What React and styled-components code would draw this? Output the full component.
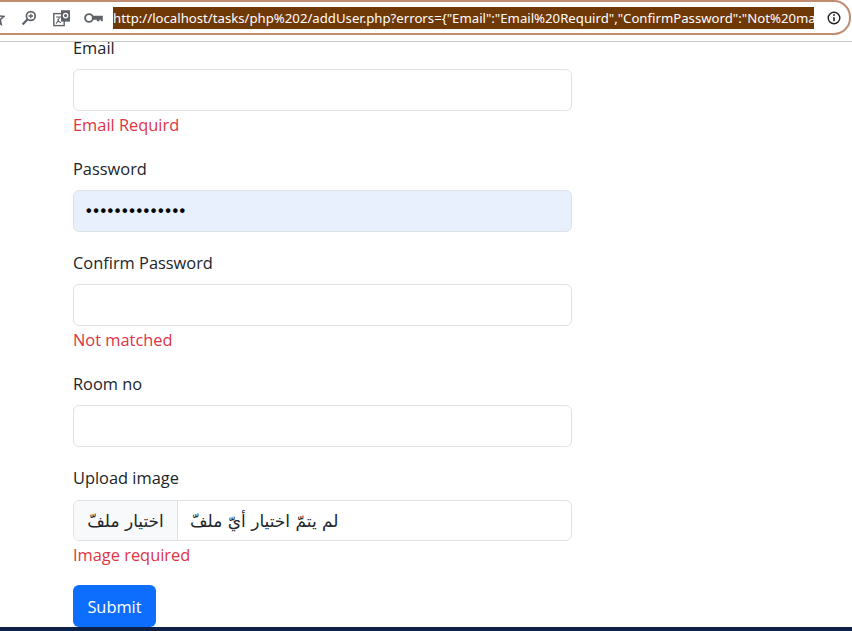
import styled, { createGlobalStyle } from "styled-components";

const GlobalStyle = createGlobalStyle`
  html, body {
    margin: 0;
    padding: 0;
    background: #fff;
  }
  body {
    width: 852px;
    height: 631px;
    overflow: hidden;
    font-family: "Open Sans", "Noto Sans", sans-serif;
  }
`;

const Page = styled.div`
  display: flex;
  flex-direction: column;
  height: 631px;
  overflow: hidden;
`;

const Toolbar = styled.header`
  height: 42px;
  flex: none;
  box-sizing: border-box;
  border-bottom: 1px solid #c9c9c9;
  background: #fff;
  overflow: hidden;
`;

const AddressBar = styled.div`
  height: 35px;
  box-sizing: border-box;
  margin-left: -20px;
  width: 871px;
  border: 2px solid #bf8d70;
  border-radius: 17px;
  display: flex;
  align-items: center;
  padding-left: 7px;
`;

const ToolIcon = styled.svg`
  flex: none;
  margin-right: ${(p) => p.$gap}px;
  color: ${(p) => p.$color ?? "#5f6368"};
`;

const UrlText = styled.div`
  width: 701px;
  flex: none;
  height: 22px;
  line-height: 22px;
  margin-right: 13px;
  background: #6f3807;
  color: #fff;
  font-size: 13.2px;
  font-family: "Noto Sans", sans-serif;
  white-space: nowrap;
  overflow: hidden;
`;

const Form = styled.div`
  flex: 1;
  width: 499px;
  margin-left: 73px;
  margin-top: -6px;
  color: #212529;
  font-size: 16.4px;
`;

const Group = styled.div`
  margin-bottom: ${(p) => p.$mb ?? 18}px;
`;

const Label = styled.label`
  display: block;
  height: 24px;
  line-height: 24px;
  margin-bottom: ${(p) => p.$mb ?? 9}px;
`;

const Input = styled.div`
  height: 42px;
  box-sizing: border-box;
  border: 1px solid #dee2e6;
  border-radius: 6px;
  background: ${(p) => (p.$filled ? "#e8f0fe" : "#fff")};
  display: flex;
  align-items: center;
  padding: 0 12px;
`;

const Dots = styled.span`
  color: #000;
  font-size: 16px;
  letter-spacing: 1.6px;
  font-family: "Liberation Sans", sans-serif;
  font-weight: bold;
`;

const FileInput = styled.div`
  height: 41px;
  box-sizing: border-box;
  border: 1px solid #dee2e6;
  border-radius: 6px;
  display: flex;
  align-items: stretch;
  overflow: hidden;
  font-family: "DejaVu Sans", sans-serif;
  font-size: 17px;
`;

const FileButton = styled.div`
  width: 104px;
  flex: none;
  box-sizing: border-box;
  background: #f8f9fa;
  border-right: 1px solid #dee2e6;
  display: flex;
  align-items: center;
  justify-content: center;
  direction: rtl;
`;

const FileName = styled.div`
  display: flex;
  align-items: center;
  padding-left: 12px;
  direction: rtl;
`;

const ErrorText = styled.div`
  height: 28px;
  line-height: 28px;
  color: #dc3545;
`;

const SubmitButton = styled.button`
  display: block;
  width: 83px;
  height: 42px;
  margin-top: 16px;
  border: 0;
  border-radius: 6px;
  background: #0d6efd;
  color: #fff;
  font: inherit;
  padding: 0;
`;

const BottomStrip = styled.div`
  height: 4px;
  flex: none;
  background: #0d2148;
`;

const StarIcon = () => (
  <ToolIcon $gap={16} width="16" height="16" viewBox="0 0 16 16" fill="none" stroke="currentColor" strokeWidth="1.6">
    <path d="M8 1.5l2 4.4 4.8.5-3.6 3.2 1 4.7L8 11.5l-4.2 2.8 1-4.7L1.2 6.4 6 5.9z" />
  </ToolIcon>
);

const ZoomIcon = () => (
  <ToolIcon $gap={16} width="16" height="16" viewBox="0 0 16 16" fill="none" stroke="currentColor" strokeWidth="1.7">
    <circle cx="9.8" cy="6" r="4.4" />
    <path d="M6.6 9.2L1.6 14.6" strokeWidth="2.2" />
    <path d="M7.6 6h4.4M9.8 3.8v4.4" strokeWidth="1.3" />
  </ToolIcon>
);

const TranslateIcon = () => (
  <ToolIcon $gap={13} width="18" height="18" viewBox="0 0 18 18" fill="none" stroke="currentColor">
    <rect x="0.8" y="4.6" width="10.4" height="12" strokeWidth="1.4" fill="#fff" />
    <path d="M8 1.2h9v11.4H8z" fill="currentColor" stroke="none" />
    <circle cx="12.6" cy="6.6" r="2.2" stroke="#fff" strokeWidth="1.2" />
    <path d="M3 8h6M6.4 8c-.4 3-1.6 5-3.4 6.6M4.4 10.4c.8 1.4 2 2.6 3.4 3.4" strokeWidth="1.1" />
  </ToolIcon>
);

const KeyIcon = () => (
  <ToolIcon $gap={10} width="19" height="12" viewBox="0 0 19 12" fill="none" stroke="currentColor">
    <circle cx="5" cy="6" r="3.9" strokeWidth="1.9" />
    <path d="M8.6 3.8h10.2v5.4h-2V7.8h-1.4v1.4h-2.6V7.8H8.6z" fill="currentColor" stroke="none" />
  </ToolIcon>
);

const InfoIcon = () => (
  <ToolIcon $gap={0} $color="#222" width="14" height="14" viewBox="0 0 14 14" fill="none" stroke="currentColor">
    <circle cx="7" cy="7" r="5.8" strokeWidth="1.4" />
    <path d="M7 6.2v4" strokeWidth="1.6" />
    <circle cx="7" cy="4" r="0.9" fill="currentColor" stroke="none" />
  </ToolIcon>
);

export default function App() {
  return (
    <Page>
      <GlobalStyle />
      <Toolbar>
        <AddressBar>
          <StarIcon />
          <ZoomIcon />
          <TranslateIcon />
          <KeyIcon />
          <UrlText>
            http://localhost/tasks/php%202/addUser.php?errors={'{'}"Email":"Email%20Requird","ConfirmPassword":"Not%20matched"
          </UrlText>
          <InfoIcon />
        </AddressBar>
      </Toolbar>
      <Form>
        <Label>Email</Label>
        <Input />
        <Group>
          <ErrorText>Email Requird</ErrorText>
        </Group>
        <Group $mb={19}>
          <Label>Password</Label>
          <Input $filled>
            <Dots>••••••••••••••</Dots>
          </Input>
        </Group>
        <Label>Confirm Password</Label>
        <Input />
        <Group>
          <ErrorText>Not matched</ErrorText>
        </Group>
        <Group $mb={19}>
          <Label>Room no</Label>
          <Input />
        </Group>
        <Label $mb={10}>Upload image</Label>
        <FileInput>
          <FileButton>اختيار ملفّ</FileButton>
          <FileName>لم يتمّ اختيار أيّ ملفّ</FileName>
        </FileInput>
        <ErrorText>Image required</ErrorText>
        <SubmitButton>Submit</SubmitButton>
      </Form>
      <BottomStrip />
    </Page>
  );
}
